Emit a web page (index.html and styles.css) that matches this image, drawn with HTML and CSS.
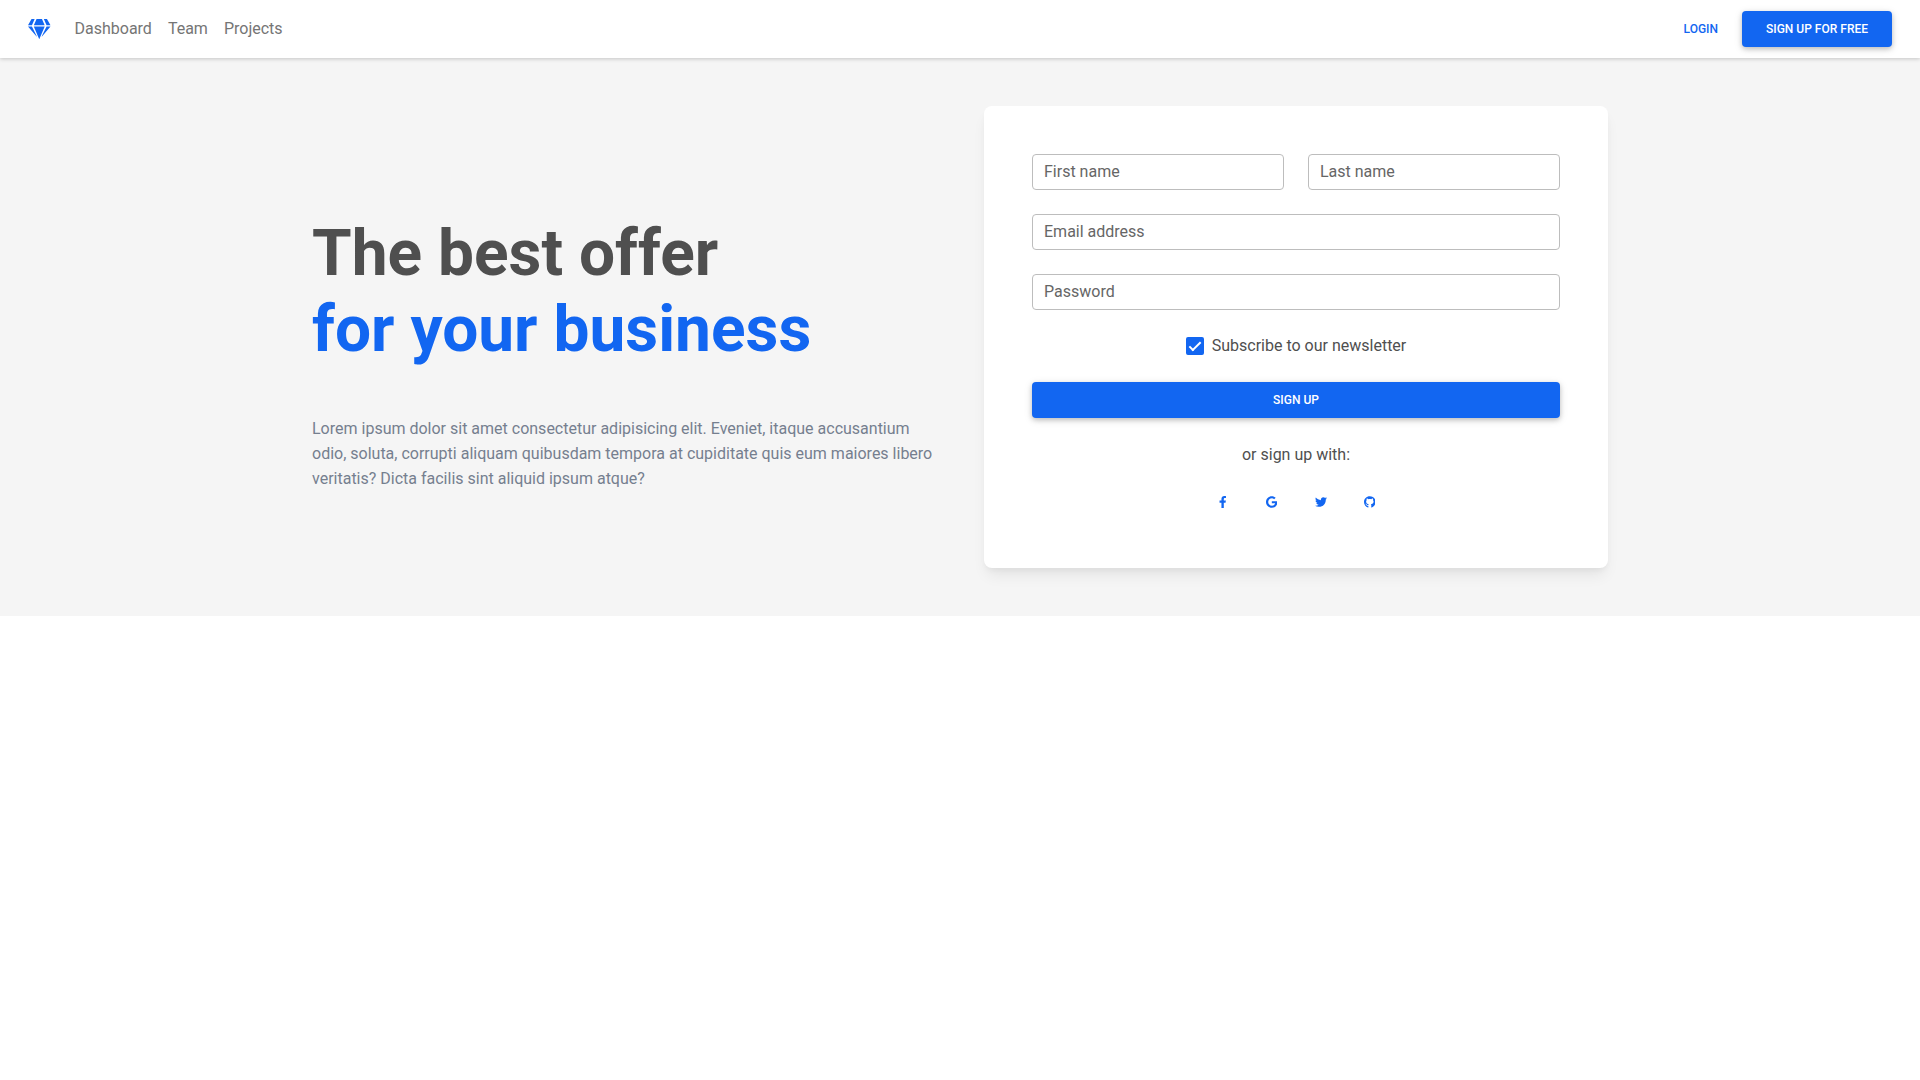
FILE: index.html
```html
<!DOCTYPE html>
<html lang="en">
<head>
    <meta charset="UTF-8">
    <meta name="viewport" content="width=device-width, initial-scale=1.0">
    <title>Sign up</title>
    <link rel="stylesheet" href="styles.css">
</head>
<body>

    <header>
        <nav class="navbar">
            <a class="brand" href="#" aria-label="Home">
                <svg viewBox="0 0 576 512"><path d="M485.5 0L576 160H474.9L405.7 0h79.8zm-128 0l69.2 160H149.3L218.5 0h139zm-267 0h79.8l-69.2 160H0L90.5 0zM0 192h100.7l123 251.7c1.5 3.1-2.7 5.9-5 3.3L0 192zm148.2 0h279.6l-137 318.2c-1 2.4-4.5 2.4-5.5 0L148.2 192zm204.1 251.7l123-251.7H576L357.3 446.9c-2.3 2.7-6.5-.1-5-3.2z"/></svg>
            </a>
            <ul class="nav-links">
                <li><a href="#">Dashboard</a></li>
                <li><a href="#">Team</a></li>
                <li><a href="#">Projects</a></li>
            </ul>
            <div class="nav-buttons">
                <button type="button" class="btn btn-link">Login</button>
                <button type="button" class="btn btn-primary">Sign up for free</button>
            </div>
        </nav>
    </header>

    <section class="hero">
        <div class="container">
            <div class="intro">
                <h1>The best offer <br><span>for your business</span></h1>
                <p>Lorem ipsum dolor sit amet consectetur adipisicing elit. Eveniet, itaque accusantium odio, soluta, corrupti aliquam quibusdam tempora at cupiditate quis eum maiores libero veritatis? Dicta facilis sint aliquid ipsum atque?</p>
            </div>

            <form class="card">
                <div class="form-row">
                    <div class="field">
                        <input type="text" id="firstName" placeholder=" ">
                        <label for="firstName">First name</label>
                    </div>
                    <div class="field">
                        <input type="text" id="lastName" placeholder=" ">
                        <label for="lastName">Last name</label>
                    </div>
                </div>
                <div class="field">
                    <input type="email" id="email" placeholder=" ">
                    <label for="email">Email address</label>
                </div>
                <div class="field">
                    <input type="password" id="password" placeholder=" ">
                    <label for="password">Password</label>
                </div>

                <div class="check">
                    <input type="checkbox" id="newsletter" checked>
                    <label for="newsletter">Subscribe to our newsletter</label>
                </div>

                <button type="button" class="btn btn-primary">Sign up</button>

                <div class="social">
                    <p>or sign up with:</p>
                    <div class="social-buttons">
                        <button type="button" class="btn btn-icon" aria-label="Facebook">
                            <svg viewBox="0 0 320 512"><path d="M279.14 288l14.22-92.66h-88.91v-60.13c0-25.35 12.42-50.06 52.24-50.06h40.42V6.26S260.43 0 225.36 0c-73.22 0-121.08 44.38-121.08 124.72v70.62H22.89V288h81.39v224h100.17V288z"/></svg>
                        </button>
                        <button type="button" class="btn btn-icon" aria-label="Google">
                            <svg viewBox="0 0 488 512"><path d="M488 261.8C488 403.3 391.1 504 248 504 110.8 504 0 393.2 0 256S110.8 8 248 8c66.8 0 123 24.5 166.3 64.9l-67.5 64.9C258.5 52.6 94.3 116.6 94.3 256c0 86.5 69.1 156.6 153.7 156.6 98.2 0 135-70.4 140.8-106.9H248v-85.3h236.1c2.3 12.7 3.9 24.9 3.9 41.4z"/></svg>
                        </button>
                        <button type="button" class="btn btn-icon" aria-label="Twitter">
                            <svg viewBox="0 0 512 512"><path d="M459.37 151.716c.325 4.548.325 9.097.325 13.645 0 138.72-105.583 298.558-298.558 298.558-59.452 0-114.68-17.219-161.137-47.106 8.447.974 16.568 1.299 25.34 1.299 49.055 0 94.213-16.568 130.274-44.832-46.132-.975-84.792-31.188-98.112-72.772 6.498.974 12.995 1.624 19.818 1.624 9.421 0 18.843-1.3 27.614-3.573-48.081-9.747-84.143-51.98-84.143-102.985v-1.299c13.969 7.797 30.214 12.67 47.431 13.319-28.264-18.843-46.781-51.005-46.781-87.391 0-19.492 5.197-37.36 14.294-52.954 51.655 63.675 129.3 105.258 216.365 109.807-1.624-7.797-2.599-15.918-2.599-24.04 0-57.828 46.782-104.934 104.934-104.934 30.213 0 57.502 12.67 76.67 33.137 23.715-4.548 46.456-13.32 66.599-25.34-7.798 24.366-24.366 44.833-46.132 57.827 21.117-2.273 41.584-8.122 60.426-16.243-14.292 20.791-32.161 39.308-52.628 54.253z"/></svg>
                        </button>
                        <button type="button" class="btn btn-icon" aria-label="GitHub">
                            <svg viewBox="0 0 496 512"><path d="M244.8 8C106.1 8 0 113.3 0 252c0 110.9 69.8 205.8 169.5 239.2 12.8 2.3 17.3-5.6 17.3-12.1 0-6.2-.3-40.4-.3-61.4 0 0-70 15-84.7-29.8 0 0-11.4-29.1-27.8-36.6 0 0-22.9-15.7 1.6-15.4 0 0 24.9 2 38.6 25.8 21.9 38.6 58.6 27.5 72.9 20.9 2.3-16 8.8-27.1 16-33.7-55.9-6.2-112.3-14.3-112.3-110.5 0-27.5 7.6-41.3 23.6-58.9-2.6-6.5-11.1-33.3 2.6-67.9 20.9-6.5 69 27 69 27 20-5.6 41.5-8.5 62.8-8.5s42.8 2.9 62.8 8.5c0 0 48.1-33.6 69-27 13.7 34.7 5.2 61.4 2.6 67.9 16 17.7 25.8 31.5 25.8 58.9 0 96.5-58.9 104.2-114.8 110.5 9.2 7.9 17 22.9 17 46.4 0 33.7-.3 75.4-.3 83.6 0 6.5 4.6 14.4 17.3 12.1C428.2 457.8 496 362.9 496 252 496 113.3 383.5 8 244.8 8z"/></svg>
                        </button>
                    </div>
                </div>
            </form>
        </div>
    </section>

</body>
</html>
```
FILE: styles.css
```css
*,
*::after {
    box-sizing: border-box;
}

body {
    margin: 0;
    font-family: Roboto, sans-serif;
    font-size: 16px;
    line-height: 26px;
    color: #4f4f4f;
    background-color: #fff;
}

svg {
    display: block;
    fill: currentColor;
}

/* Navbar */
.navbar {
    position: relative;
    z-index: 1;
    display: flex;
    align-items: center;
    padding: 11px 28px;
    background-color: #fff;
    box-shadow: 0 1px 4px rgba(0, 0, 0, 0.2);
}

.brand {
    margin-right: 24px;
    color: #1266f1;
}

.brand svg {
    height: 20px;
}

.nav-links {
    display: flex;
    gap: 16px;
    margin: 0;
    padding: 0;
    list-style: none;
}

.nav-links a {
    color: #757575;
    text-decoration: none;
}

.nav-buttons {
    display: flex;
    margin-left: auto;
}

/* Buttons */
.btn {
    height: 36px;
    padding: 0 24px;
    border: 0;
    border-radius: 4px;
    background-color: transparent;
    color: #1266f1;
    font-family: inherit;
    font-size: 12px;
    font-weight: 500;
    text-transform: uppercase;
    cursor: pointer;
}

.btn-primary {
    background-color: #1266f1;
    color: #fff;
    box-shadow: 0 2px 5px rgba(0, 0, 0, 0.2), 0 2px 10px rgba(0, 0, 0, 0.1);
}

/* Hero */
.hero {
    padding: 48px 24px;
    background-color: #f5f5f5;
}

.container {
    display: grid;
    grid-template-columns: 1fr 1fr;
    align-items: center;
    gap: 48px;
    max-width: 1296px;
    margin: 0 auto;
}

.intro h1 {
    margin: 48px 0;
    font-size: 64px;
    font-weight: 700;
    line-height: 76px;
}

.intro h1 span {
    color: #1266f1;
}

.intro p {
    margin: 0 0 16px;
    line-height: 25px;
    color: #757f8f;
}

/* Sign up card */
.card {
    display: flex;
    flex-direction: column;
    gap: 24px;
    padding: 48px;
    border-radius: 8px;
    background-color: #fff;
    box-shadow: 0 10px 15px -3px rgba(0, 0, 0, 0.07), 0 4px 6px -2px rgba(0, 0, 0, 0.05);
}

.form-row {
    display: grid;
    grid-template-columns: 1fr 1fr;
    gap: 24px;
}

.field {
    position: relative;
}

.field input {
    display: block;
    width: 100%;
    height: 36px;
    padding: 0 12px;
    border: 1px solid #bdbdbd;
    border-radius: 4px;
    background-color: transparent;
    font: inherit;
    color: inherit;
}

/* Label sits in the empty input */
.field label {
    position: absolute;
    top: 5px;
    left: 12px;
    color: #666;
    pointer-events: none;
}

.field input:not(:placeholder-shown) + label {
    display: none;
}

.check {
    display: flex;
    justify-content: center;
    align-items: center;
    gap: 8px;
    line-height: 24px;
}

.check input {
    appearance: none;
    display: grid;
    place-items: center;
    width: 18px;
    height: 18px;
    margin: 0;
    border: 2px solid #757575;
    border-radius: 2px;
}

.check input:checked {
    border-color: #1266f1;
    background-color: #1266f1;
}

.check input:checked::after {
    content: "";
    width: 6px;
    height: 12px;
    margin-bottom: 4px;
    border: solid #fff;
    border-width: 0 2px 2px 0;
    transform: rotate(45deg);
}

.social p {
    margin: 0 0 16px;
    text-align: center;
}

.social-buttons {
    display: flex;
    justify-content: center;
    gap: 8px;
}

.btn-icon {
    display: flex;
    justify-content: center;
    align-items: center;
    width: 41px;
    padding: 0;
}

.btn-icon svg {
    height: 12px;
}

@media (max-width: 991px) {
    .container {
        grid-template-columns: 1fr;
    }
}
```
